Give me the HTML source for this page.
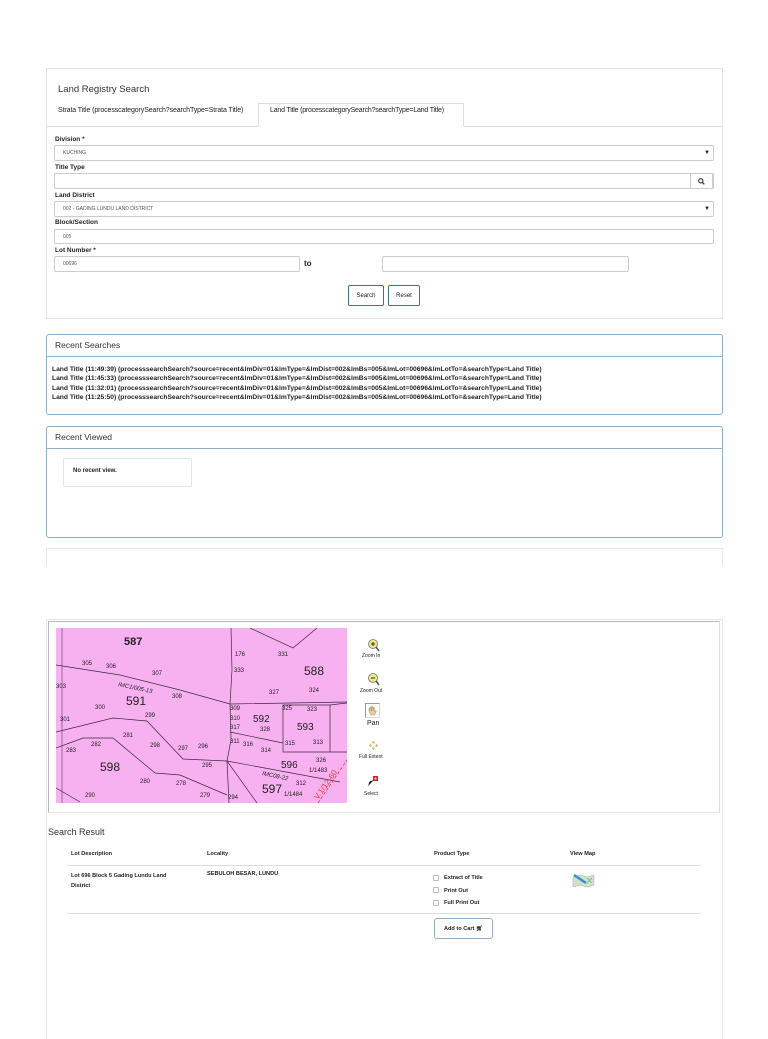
<!DOCTYPE html>
<html><head><meta charset="utf-8"><style>
*{box-sizing:border-box;margin:0;padding:0}
body{width:768px;height:1024px;background:#fff;font-family:"Liberation Sans",sans-serif;color:#222;position:relative;overflow:hidden}
.a{position:absolute}
.lbl{position:absolute;font-size:6.5px;font-weight:bold;left:55px}
.inp{position:absolute;border:1px solid #ccc;border-radius:2px;background:#fff;font-size:5px;color:#555;padding-left:8px;display:flex;align-items:center}
.btn{position:absolute;border:1px solid #3b6ea5;border-radius:2px;background:#fff;font-size:6px;display:flex;align-items:center;justify-content:center;box-shadow:inset 0 0 0 1px #fff}
.tiny{font-size:5.6px}
</style></head><body>

<div class="a" style="left:46px;top:68px;width:677px;height:251px;border:1px solid #e3e3e3"></div>
<div class="a" style="left:58px;top:84px;font-size:9.5px;color:#333">Land Registry Search</div>
<div class="a" style="left:58px;top:107px;font-size:7px;letter-spacing:-0.1px">Strata Title (processcategorySearch?searchType=Strata Title)</div>
<div class="a" style="left:47px;top:126px;width:675px;height:1px;background:#ddd"></div>
<div class="a" style="left:258px;top:103px;width:206px;height:24px;border:1px solid #ddd;border-bottom:1px solid #fff;background:#fff"></div>
<div class="a" style="left:270px;top:107px;font-size:7px;letter-spacing:-0.2px">Land Title (processcategorySearch?searchType=Land Title)</div>

<div class="lbl" style="top:136px">Division *</div>
<div class="inp" style="left:54px;top:145px;width:660px;height:16px">KUCHING<span style="position:absolute;right:3px;font-size:6px;color:#222">▼</span></div>
<div class="lbl" style="top:164px">Title Type</div>
<div class="inp" style="left:54px;top:173px;width:660px;height:16px"><span style="position:absolute;right:0;top:-1px;width:23px;height:16px;border:1px solid #ccc;display:flex;align-items:center;justify-content:center"><svg width="7" height="7" viewBox="0 0 10 10"><circle cx="4" cy="4" r="3" fill="none" stroke="#333" stroke-width="1.6"/><path d="M6 6l3 3" stroke="#333" stroke-width="1.8"/></svg></span></div>
<div class="lbl" style="top:192px">Land District</div>
<div class="inp" style="left:54px;top:201px;width:660px;height:16px">002 - GADING LUNDU LAND DISTRICT<span style="position:absolute;right:3px;font-size:6px;color:#222">▼</span></div>
<div class="lbl" style="top:219px">Block/Section</div>
<div class="inp" style="left:54px;top:229px;width:660px;height:15px">005</div>
<div class="lbl" style="top:247px">Lot Number *</div>
<div class="inp" style="left:54px;top:256px;width:246px;height:16px">00696</div>
<div class="a" style="left:304px;top:259px;font-size:8px;font-weight:bold">to</div>
<div class="inp" style="left:382px;top:256px;width:247px;height:16px"></div>
<div class="btn" style="left:348px;top:285px;width:36px;height:21px">Search</div>
<div class="btn" style="left:388px;top:285px;width:32px;height:21px">Reset</div>

<div class="a" style="left:46px;top:334px;width:677px;height:81px;border:1px solid #8fb0cc;border-radius:3px"></div>
<div class="a" style="left:47px;top:356px;width:675px;height:1px;background:#8fb0cc"></div>
<div class="a" style="left:55px;top:340px;font-size:8.5px;color:#333">Recent Searches</div>
<div class="a" style="left:52px;top:365px;line-height:9.3px;font-size:6.7px;font-weight:bold;letter-spacing:0;white-space:nowrap">Land Title (11:49:39) (processsearchSearch?source=recent&amp;lmDiv=01&amp;lmType=&amp;lmDist=002&amp;lmBs=005&amp;lmLot=00696&amp;lmLotTo=&amp;searchType=Land Title)<br>Land Title (11:45:33) (processsearchSearch?source=recent&amp;lmDiv=01&amp;lmType=&amp;lmDist=002&amp;lmBs=005&amp;lmLot=00696&amp;lmLotTo=&amp;searchType=Land Title)<br>Land Title (11:32:01) (processsearchSearch?source=recent&amp;lmDiv=01&amp;lmType=&amp;lmDist=002&amp;lmBs=005&amp;lmLot=00696&amp;lmLotTo=&amp;searchType=Land Title)<br>Land Title (11:25:50) (processsearchSearch?source=recent&amp;lmDiv=01&amp;lmType=&amp;lmDist=002&amp;lmBs=005&amp;lmLot=00696&amp;lmLotTo=&amp;searchType=Land Title)</div>

<div class="a" style="left:46px;top:426px;width:677px;height:112px;border:1px solid #8fb0cc;border-radius:3px"></div>
<div class="a" style="left:47px;top:448px;width:675px;height:1px;background:#8fb0cc"></div>
<div class="a" style="left:55px;top:432px;font-size:8.5px;color:#333">Recent Viewed</div>
<div class="a" style="left:63px;top:458px;width:129px;height:29px;border:1px solid #dde8ee;border-radius:2px"></div>
<div class="a" style="left:73px;top:468px;font-weight:bold;font-size:6px">No recent view.</div>

<div class="a" style="left:46px;top:548px;width:677px;height:30px;border:1px solid #e6e6e6;border-bottom:none"></div>
<div class="a" style="left:44px;top:566px;width:682px;height:50px;background:#fff"></div>

<div class="a" style="left:46px;top:619px;width:677px;height:420px;border:1px solid #e6e6e6;border-bottom:none"></div>
<div class="a" style="left:48px;top:621px;width:672px;height:192px;border:1px solid #bbb;border-right-color:#ddd;border-bottom-color:#e6e6e6"></div>
<svg class="a" style="left:56px;top:628px" width="291" height="175" viewBox="56 628 291 175" font-family="Liberation Sans" fill="#222">
<rect x="56" y="628" width="291" height="175" fill="#f8b1f0"/>
<g stroke="#3a2a3a" stroke-width="0.7" fill="none">
<path d="M56 665L120 675L180 690L230 704L347 702"/>
<path d="M231 628L232 670L230 704L231 740L227 761L229 803"/>
<path d="M250 628L293 648L317 628"/>
<path d="M283 705H330V752H283Z"/>
<path d="M330 752H347M330 705L347 703"/>
<path d="M56 732L113 718L147 721L183 759L227 761"/>
<path d="M230 732L283 743"/>
<path d="M56 748L83 738L113 738L155 773L180 775L227 795"/>
<path d="M227 761L257 803M227 761L340 782"/>
<path d="M56 788L80 802"/>
<path d="M62 628V803" stroke-width="0.5"/>
</g>
<path d="M318 803L347 760" stroke="#e33" stroke-width="0.8" stroke-dasharray="3 2" fill="none"/>
<text x="318" y="800" font-size="8" fill="#e33" transform="rotate(-55 318 800)">V.1/12-60</text>
<g font-size="6">
<text x="82" y="665">305</text><text x="106" y="668">306</text><text x="152" y="675">307</text><text x="56" y="688">303</text>
<text x="95" y="709">300</text><text x="172" y="698">308</text><text x="60" y="721">301</text><text x="145" y="717">299</text>
<text x="123" y="737">281</text><text x="91" y="746">282</text><text x="66" y="752">283</text><text x="150" y="747">298</text>
<text x="178" y="750">297</text><text x="198" y="748">296</text><text x="202" y="767">295</text><text x="140" y="783">280</text>
<text x="176" y="785">278</text><text x="200" y="797">279</text><text x="85" y="797">290</text><text x="228" y="799">294</text>
<text x="235" y="656">176</text><text x="234" y="672">333</text><text x="278" y="656">331</text><text x="269" y="694">327</text>
<text x="309" y="692">324</text><text x="230" y="710">309</text><text x="230" y="720">310</text><text x="230" y="729">317</text>
<text x="260" y="731">328</text><text x="282" y="710">325</text><text x="307" y="711">323</text><text x="230" y="743">311</text>
<text x="243" y="746">316</text><text x="261" y="752">314</text><text x="285" y="745">315</text><text x="313" y="744">313</text>
<text x="316" y="762">326</text><text x="309" y="772">1/1483</text><text x="296" y="785">312</text><text x="284" y="796">1/1484</text>
<text x="118" y="686" font-style="italic" transform="rotate(12 118 686)">IMC1/005-13</text>
<text x="262" y="775" font-style="italic" transform="rotate(12 262 775)">IMC08-22</text>
</g>
<g font-size="12"><text x="124" y="645" font-weight="bold" font-size="11">587</text><text x="304" y="675">588</text><text x="126" y="705">591</text>
<text x="100" y="771">598</text><text x="253" y="722" font-size="10">592</text><text x="297" y="730" font-size="10">593</text>
<text x="281" y="768" font-size="10">596</text><text x="262" y="793">597</text></g>
</svg>

<svg class="a" style="left:366px;top:638px" width="14" height="14"><circle cx="7" cy="6" r="4.5" fill="#eee68a" stroke="#776" stroke-width="0.8"/><path d="M5 6h4M7 4v4" stroke="#333"/><path d="M10 9l3 4" stroke="#555" stroke-width="1.5"/></svg>
<div class="a" style="left:362px;top:653px;font-size:5px">Zoom In</div>
<svg class="a" style="left:366px;top:672px" width="14" height="14"><circle cx="7" cy="6" r="4.5" fill="#eee68a" stroke="#776" stroke-width="0.8"/><path d="M5 6h4" stroke="#333"/><path d="M10 9l3 4" stroke="#555" stroke-width="1.5"/></svg>
<div class="a" style="left:360px;top:688px;font-size:5px">Zoom Out</div>
<div class="a" style="left:365px;top:703px;width:15px;height:15px;border:1px solid #999;border-right-color:#ddd;border-bottom-color:#ddd"></div>
<svg class="a" style="left:367px;top:705px" width="11" height="11"><path d="M2 6V3h1v3V2h1.5v4V1.5H6V6V2.5h1.5V7l1-1.5 1 .5-2 4H4L2 7z" fill="#f4c9a2" stroke="#996" stroke-width="0.5"/></svg>
<div class="a" style="left:367px;top:720px;font-size:7px">Pan</div>
<svg class="a" style="left:368px;top:740px" width="11" height="11"><path d="M5.5 1L7 3H4zM5.5 10L4 8h3zM1 5.5L3 4v3zM10 5.5L8 7V4z" fill="#f2d27a" stroke="#c96" stroke-width="0.5"/></svg>
<div class="a" style="left:359px;top:754px;font-size:5px">Full Extent</div>
<svg class="a" style="left:366px;top:774px" width="14" height="14"><path d="M7 2h5v5h-5z" fill="#d22"/><circle cx="9.5" cy="4.5" r="1" fill="#fff"/><path d="M8 6L2 12l1.5-4.5z" fill="#111"/></svg>
<div class="a" style="left:364px;top:791px;font-size:5px">Select</div>

<div class="a" style="left:48px;top:827px;font-size:9px;color:#333">Search Result</div>
<div class="a tiny" style="left:71px;top:851px;font-weight:bold">Lot Description</div>
<div class="a tiny" style="left:207px;top:851px;font-weight:bold">Locality</div>
<div class="a tiny" style="left:434px;top:851px;font-weight:bold">Product Type</div>
<div class="a tiny" style="left:570px;top:851px;font-weight:bold">View Map</div>
<div class="a" style="left:67px;top:865px;width:634px;height:1px;background:#ddd"></div>
<div class="a tiny" style="left:71px;top:871px;line-height:10px;font-weight:bold">Lot 696 Block 5 Gading Lundu Land<br>District</div>
<div class="a tiny" style="left:207px;top:871px;font-weight:bold">SEBULOH BESAR, LUNDU</div>
<div class="a tiny" style="left:433px;top:872px;line-height:12.5px;font-weight:bold">
<div><span style="display:inline-block;width:6px;height:6px;border:1px solid #bbb;border-radius:1px;vertical-align:middle;margin-right:5px"></span>Extract of Title</div>
<div><span style="display:inline-block;width:6px;height:6px;border:1px solid #bbb;border-radius:1px;vertical-align:middle;margin-right:5px"></span>Print Out</div>
<div><span style="display:inline-block;width:6px;height:6px;border:1px solid #bbb;border-radius:1px;vertical-align:middle;margin-right:5px"></span>Full Print Out</div></div>
<svg class="a" style="left:571px;top:873px" width="24" height="14"><path d="M2 4l7-2 7 2 7-2v10l-7 2-7-2-7 2z" fill="#cfe3c9" stroke="#9ab" stroke-width="0.5"/><path d="M3 2l12 8" stroke="#3a8fd0" stroke-width="2.5"/><path d="M16 5l5 5M21 5l-5 5" stroke="#8a8" stroke-width="0.8"/></svg>
<div class="a" style="left:67px;top:913px;width:634px;height:1px;background:#ddd"></div>
<div class="btn" style="left:434px;top:918px;width:59px;height:21px;border-color:#8fb0cc;border-radius:3px;font-weight:bold;font-size:5.6px">Add to Cart &#x1F6D2;&#xFE0E;</div>
</body></html>
